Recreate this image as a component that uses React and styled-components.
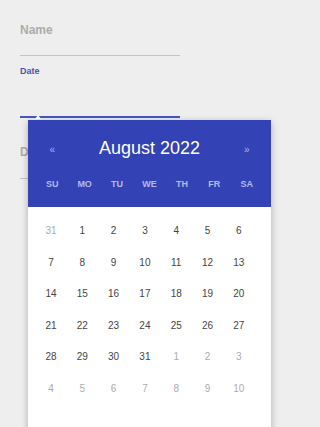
import React from "react";
import styled, { createGlobalStyle } from "styled-components";

const GlobalStyle = createGlobalStyle`
  html, body {
    margin: 0;
    padding: 0;
    background: #eeeeee;
    font-family: "Liberation Sans", Arial, sans-serif;
  }
`;

const Page = styled.div`
  position: relative;
  width: 300px;
  height: 427px;
  overflow: hidden;
`;

const Form = styled.form`
  display: flex;
  flex-direction: column;
  width: 160px;
  margin-left: 20px;
`;

const Field = styled.div`
  display: flex;
  flex-direction: column;
  padding-top: ${p => p.$top}px;
  border-bottom: ${p => (p.$focused ? "2px solid #4656c0" : "1px solid #c4c4c4")};
`;

const Label = styled.label`
  font-weight: bold;
  font-size: ${p => (p.$floating ? 9 : 12)}px;
  line-height: ${p => (p.$floating ? 11 : 14)}px;
  color: ${p => (p.$floating ? "#4a54ab" : "#acacac")};
`;

const InputSpace = styled.div`
  height: ${p => p.$h}px;
`;

const Popup = styled.div`
  position: absolute;
  left: 28px;
  top: 120px;
  width: 243px;
  height: 320px;
  background: #ffffff;
  box-shadow: 0 2px 7px rgba(0, 0, 0, 0.28);
`;

const Caret = styled.span`
  position: absolute;
  left: 7px;
  top: -5px;
  width: 0;
  height: 0;
  border-left: 3px solid transparent;
  border-right: 3px solid transparent;
  border-bottom: 4px solid #ffffff;
`;

const Header = styled.div`
  display: flex;
  flex-direction: column;
  height: 87px;
  padding: 16px 8px 0;
  box-sizing: border-box;
  background: #3342b4;
`;

const TitleRow = styled.div`
  display: grid;
  grid-template-columns: repeat(7, 1fr);
  align-items: center;
  height: 24px;
`;

const Arrow = styled.span`
  text-align: center;
  font-size: 10px;
  color: #aab2e8;
  padding-top: 2px;
`;

const Title = styled.div`
  grid-column: 2 / 7;
  text-align: center;
  font-size: 18px;
  color: #ffffff;
`;

const WeekRow = styled.div`
  display: grid;
  grid-template-columns: repeat(7, 1fr);
  margin-top: 18px;
`;

const WeekDay = styled.span`
  text-align: center;
  font-size: 9px;
  line-height: 12px;
  font-weight: bold;
  color: #b3baeb;
`;

const Days = styled.div`
  display: grid;
  grid-template-columns: repeat(7, 31.3px);
  grid-auto-rows: 31.5px;
  padding: 8px 0 0 7.4px;
`;

const Day = styled.span`
  display: flex;
  align-items: center;
  justify-content: center;
  font-size: 10px;
  color: ${p => (p.$muted ? "#ababab" : "#444444")};
`;

const weekDays = ["SU", "MO", "TU", "WE", "TH", "FR", "SA"];

const days = [
  { n: 31, muted: true },
  ...Array.from({ length: 31 }, (_, i) => ({ n: i + 1 })),
  ...Array.from({ length: 10 }, (_, i) => ({ n: i + 1, muted: true })),
];

export default function App() {
  return (
    <Page>
      <GlobalStyle />
      <Form>
        <Field $top={23}>
          <Label>Name</Label>
          <InputSpace $h={18} />
        </Field>
        <Field $top={10} $focused>
          <Label $floating>Date</Label>
          <InputSpace $h={39} />
        </Field>
        <Field $top={27}>
          <Label>Description</Label>
          <InputSpace $h={19} />
        </Field>
      </Form>
      <Popup>
        <Caret />
        <Header>
          <TitleRow>
            <Arrow>«</Arrow>
            <Title>August 2022</Title>
            <Arrow>»</Arrow>
          </TitleRow>
          <WeekRow>
            {weekDays.map(d => (
              <WeekDay key={d}>{d}</WeekDay>
            ))}
          </WeekRow>
        </Header>
        <Days>
          {days.map((d, i) => (
            <Day key={i} $muted={d.muted}>
              {d.n}
            </Day>
          ))}
        </Days>
      </Popup>
    </Page>
  );
}
